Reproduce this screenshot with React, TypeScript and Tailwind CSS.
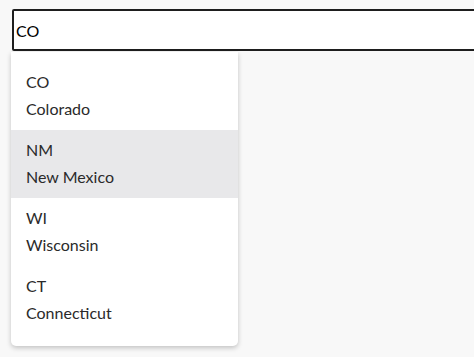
import { useState } from "react";

const STATES = [
  { code: "CO", name: "Colorado" },
  { code: "NM", name: "New Mexico" },
  { code: "WI", name: "Wisconsin" },
  { code: "CT", name: "Connecticut" },
];

export default function App() {
  const [query, setQuery] = useState("CO");
  const [active, setActive] = useState(1);

  return (
    <div
      className="relative h-[357px] w-full overflow-hidden bg-[#f8f8f8] pl-[12px] pt-[9px]"
      style={{ fontFamily: "Lato, 'Noto Sans', sans-serif" }}
    >
      <input
        value={query}
        onChange={(event) => setQuery(event.target.value)}
        className="block h-[42px] w-[480px] rounded-[2px] border-2 border-[#1e1e1e] bg-white px-[2px] text-[16px] text-black outline-none"
      />

      <ul className="absolute left-[11px] top-[52px] w-[227px] rounded-b-[5px] bg-white pb-[12px] pt-[10px] shadow-[0_2px_5px_rgba(0,0,0,0.22)]">
        {STATES.map((state, index) => (
          <li
            key={state.code}
            onMouseEnter={() => setActive(index)}
            className={`flex h-[68px] flex-col gap-[3px] px-[15px] pt-[8px] text-[16px] text-[#2a2a2a] ${
              index === active ? "bg-[#e8e8ea]" : "bg-white"
            }`}
          >
            <span className="leading-[24px]">{state.code}</span>
            <span className="leading-[24px]">{state.name}</span>
          </li>
        ))}
      </ul>
    </div>
  );
}
